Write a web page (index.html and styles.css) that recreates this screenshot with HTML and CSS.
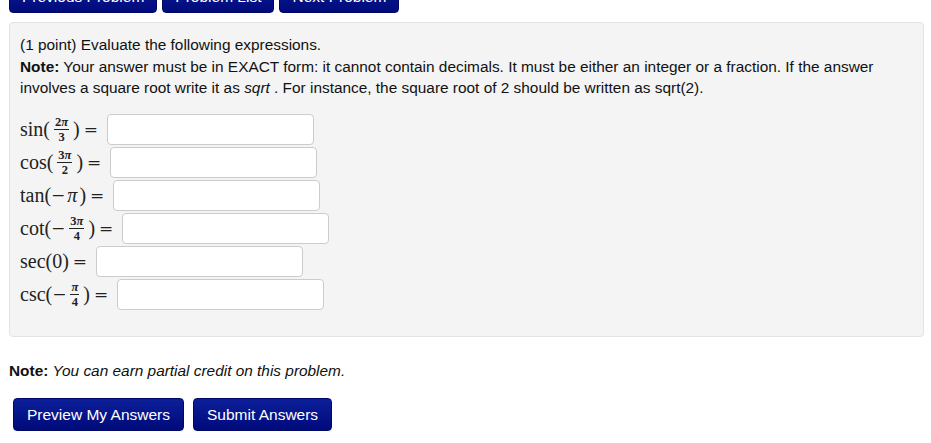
FILE: index.html
```html
<!DOCTYPE html>
<html lang="en">
<head>
  <meta charset="UTF-8">
  <title>Problem</title>
  <link rel="stylesheet" href="styles.css">
</head>
<body>

<!-- Navegacion de problemas -->
<div class="nav">
  <button class="btn nav-btn">Previous Problem</button>
  <button class="btn nav-btn">Problem List</button>
  <button class="btn nav-btn">Next Problem</button>
</div>

<!-- Enunciado -->
<div class="problem">
  <p class="intro">(1 point) Evaluate the following expressions.<br>
    <b>Note:</b> Your answer must be in EXACT form: it cannot contain decimals. It must be either an integer or a fraction. If the answer involves a square root write it as <i>sqrt</i> . For instance, the square root of 2 should be written as sqrt(2).</p>

  <div class="rows">
    <div class="row">
      <span class="math">sin(<span class="frac"><span class="num">2<i>π</i></span><span class="den">3</span></span>)<span class="op eq">=</span></span>
      <input class="answer" type="text">
    </div>
    <div class="row">
      <span class="math">cos(<span class="frac"><span class="num">3<i>π</i></span><span class="den">2</span></span>)<span class="op eq">=</span></span>
      <input class="answer" type="text">
    </div>
    <div class="row">
      <span class="math">tan(<span class="op">−</span><i class="pi">π</i>)<span class="op eq">=</span></span>
      <input class="answer" type="text">
    </div>
    <div class="row">
      <span class="math">cot(<span class="op">−</span><span class="frac"><span class="num">3<i>π</i></span><span class="den">4</span></span>)<span class="op eq">=</span></span>
      <input class="answer" type="text">
    </div>
    <div class="row">
      <span class="math">sec(0)<span class="op eq">=</span></span>
      <input class="answer" type="text">
    </div>
    <div class="row">
      <span class="math">csc(<span class="op">−</span><span class="frac"><span class="num"><i>π</i></span><span class="den">4</span></span>)<span class="op eq">=</span></span>
      <input class="answer" type="text">
    </div>
  </div>
</div>

<p class="credit"><b>Note:</b> <i>You can earn partial credit on this problem.</i></p>

<div class="actions">
  <button class="btn">Preview My Answers</button>
  <button class="btn">Submit Answers</button>
</div>

</body>
</html>
```

FILE: styles.css
```css
body {
  margin: 0;
  padding: 0 7px 0 9px;
  background: #fff;
  font-family: "Liberation Sans", Arial, sans-serif;
  font-size: 15.4px;
  color: #000;
  overflow: hidden;
}

.btn {
  font-family: "Liberation Sans", Arial, sans-serif;
  font-size: 15.5px;
  color: #fff;
  background: linear-gradient(#0c1f99, #000a7a);
  border: 1px solid #000866;
  border-radius: 4px;
  height: 33px;
  padding: 0 13px;
  white-space: nowrap;
  cursor: pointer;
}

.nav {
  display: flex;
  gap: 5px;
  margin-top: -20px;
}

.nav-btn {
  padding: 0 12px;
}

.problem {
  margin-top: 9px;
  height: 315px;
  box-sizing: border-box;
  background: #f4f4f4;
  border: 1px solid #e3e3e3;
  border-radius: 4px;
  padding: 11px 10px;
}

.intro {
  margin: 0;
  line-height: 21.5px;
  color: #111;
}

.rows {
  margin-top: 14px;
}

.row {
  display: flex;
  align-items: center;
  height: 33px;
}

.math {
  font-family: "Liberation Serif", "DejaVu Serif", serif;
  font-size: 20px;
  color: #222;
  display: inline-flex;
  align-items: center;
  white-space: pre;
}

.math i {
  font-family: "Liberation Serif", serif;
}

.math .pi {
  margin: 0 2px;
}

.op {
  font-family: "DejaVu Serif", serif;
  font-size: 17px;
}

.eq {
  margin: 0 9px 0 4px;
}

.frac {
  display: inline-flex;
  flex-direction: column;
  align-items: center;
  font-size: 12.5px;
  font-weight: bold;
  line-height: 12px;
  margin: 0 4px;
}

.frac .num {
  border-bottom: 1px solid #222;
  padding: 0 1px 1px;
}

.frac .den {
  padding-top: 1px;
}

.answer {
  width: 207px;
  height: 31px;
  box-sizing: border-box;
  border: 1px solid #ccc;
  border-radius: 4px;
  background: #fff;
}

.credit {
  margin: 25px 0 0;
  color: #111;
}

.actions {
  display: flex;
  gap: 9px;
  margin: 18px 0 0 4px;
}
```
